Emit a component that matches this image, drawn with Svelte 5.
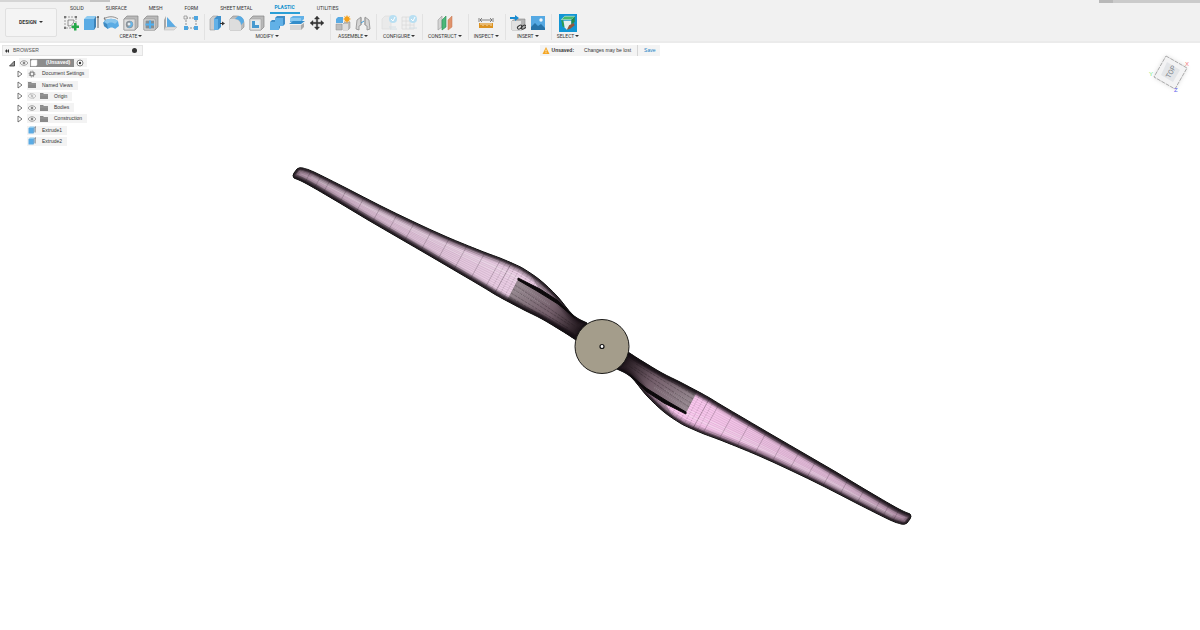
<script lang="ts">
  interface ToolGroup {
    name: string;
    icons: string[];
  }

  interface TreeItem {
    name: string;
    icon: string;
    eye?: 'on' | 'off';
    toggle?: boolean;
  }

  const tabs = ['SOLID', 'SURFACE', 'MESH', 'FORM', 'SHEET METAL', 'PLASTIC', 'UTILITIES'];
  let activeTab = $state('PLASTIC');

  const groups: ToolGroup[] = [
    { name: 'CREATE', icons: ['sketch', 'extrude', 'revolve', 'hole', 'web', 'draft', 'pattern'] },
    { name: 'MODIFY', icons: ['press', 'fillet', 'shell', 'combine', 'split', 'move'] },
    { name: 'ASSEMBLE', icons: ['component', 'joint'] },
    { name: 'CONFIGURE', icons: ['configure', 'table'] },
    { name: 'CONSTRUCT', icons: ['plane'] },
    { name: 'INSPECT', icons: ['measure'] },
    { name: 'INSERT', icons: ['derive', 'image'] },
    { name: 'SELECT', icons: ['select'] },
  ];

  const tree: TreeItem[] = [
    { name: 'Document Settings', icon: 'gear', toggle: true },
    { name: 'Named Views', icon: 'folder', toggle: true },
    { name: 'Origin', icon: 'folder', eye: 'off', toggle: true },
    { name: 'Bodies', icon: 'folder', eye: 'on', toggle: true },
    { name: 'Construction', icon: 'folder', eye: 'on', toggle: true },
    { name: 'Extrude1', icon: 'extrude' },
    { name: 'Extrude2', icon: 'extrude' },
  ];

  // Blade stations, tip to root: leading edge x, y and trailing edge x, y
  const stations = [
    [303, 168, 294, 178],
    [314, 172, 307, 184],
    [347, 188.5, 338, 202],
    [380, 205.5, 368, 220],
    [413, 221.5, 399, 238],
    [447, 237, 430, 256],
    [480, 250.5, 459, 273],
    [500, 258, 482, 286.5],
    [514, 264, 496, 295],
    [524, 269, 506, 300.5],
    [540, 280, 524, 310],
    [557, 296, 542, 319],
    [573, 315, 562, 331],
    [587, 323, 576, 340],
  ];

  const fix = (n: number) => n.toFixed(1);

  // smooth curve through the points
  const curve = (p: number[][]) =>
    p
      .slice(1)
      .map((to, i) => {
        const before = p[Math.max(i - 1, 0)];
        const from = p[i];
        const after = p[Math.min(i + 2, p.length - 1)];
        const c1 = [from[0] + (to[0] - before[0]) / 6, from[1] + (to[1] - before[1]) / 6];
        const c2 = [to[0] - (after[0] - from[0]) / 6, to[1] - (after[1] - from[1]) / 6];
        return `C${[...c1, ...c2, ...to].map(fix).join(' ')}`;
      })
      .join(' ');

  // line running along the blade, v = 0 on the leading edge and 1 on the trailing one
  const along = (v: number, from = 0, to = stations.length) => {
    const p = stations.slice(from, to).map((s) => [s[0] + (s[2] - s[0]) * v, s[1] + (s[3] - s[1]) * v]);
    return `M${p[0].map(fix).join(' ')} ${curve(p)}`;
  };

  const trailing = stations.map((s) => [s[2], s[3]]).reverse();
  const outline = `${along(0)} L${trailing[0].join(' ')} ${curve(trailing)} Q292 176 294 173 L297 169 Q299 167 303 168 Z`;

  // line running across the blade at a distance from the tip
  const across = (d: number) => {
    const x = 298 + d * 0.87;
    const y = 172 + d * 0.5;
    return `M${fix(x + 15)} ${fix(y - 27)} L${fix(x - 15)} ${fix(y + 27)}`;
  };

  const ribs = [11, 22, 32, 51, 70, 89, 107, 126, 145, 164, 183, 202, 219, 230];
  const fineRibs = Array.from({ length: 20 }, (_, i) => 225 + i * 5);
  const strands = Array.from({ length: 14 }, (_, i) => 0.08 + i * 0.065);
  const edges = [
    { width: 12, opacity: 0.12 },
    { width: 9, opacity: 0.2 },
    { width: 6, opacity: 0.35 },
    { width: 4, opacity: 0.6 },
  ];
</script>

{#snippet icon(name: string)}
  <svg class="icon" class:large={name === 'select'} viewBox="0 0 16 16" aria-hidden="true">
    {#if name === 'sketch'}
      <path d="M2 2h11v11H2z" fill="none" stroke="#777" stroke-width=".7" stroke-dasharray="2 1" />
      <path d="M5 11V5h6c0 3-2 6-6 6z" fill="none" stroke="#666" stroke-width=".7" />
      <path d="M1 1h2v2H1zM12 1h2v2h-2zM1 12h2v2H1z" fill="#777" />
      <path d="M11 8h2.500v2.500H16V13h-2.500v2.500H11V13H8.500v-2.500H11z" fill="#23a847" />
    {:else if name === 'extrude'}
      <path d="M1 4l3-3h9l-2 3z" fill="#8fcbf0" />
      <path d="M1 4h10v11H1z" fill="#5aabe4" />
      <path d="M11 4l2-3v11l-2 3z" fill="#3c82b7" />
      <path d="M15 2v11M14 3l1-2 1 2" stroke="#444" stroke-width=".8" fill="none" />
    {:else if name === 'revolve'}
      <path d="M1 6c4-3 10-3 14 0l1 5-4 3c-2-2-5-2-7 0l-4-3z" fill="#5aabe4" />
      <path d="M1 6c4-3 10-3 14 0l-3 3c-2-2-6-2-8 0z" fill="#8bc6ec" />
      <path d="M0 7l4 2 1 5-4-3z" fill="#3f89bf" />
      <path d="M1 4c4-3 10-3 14 0M2 2L1 4l2 1" fill="none" stroke="#666" stroke-width=".7" />
    {:else if name === 'hole'}
      <path d="M1 4l3-3h11v11l-3 3H1z" fill="#b9b9b9" stroke="#858585" stroke-width=".7" />
      <path d="M1 4h11v11H1z" fill="#dedede" stroke="#929292" stroke-width=".6" />
      <circle cx="6.500" cy="9.500" r="3.700" fill="#8a9299" />
      <path d="M7 6a4 4 0 0 1 3 3 4 4 0 0 1-6 3c3 0 4-2 3-6z" fill="#68b5e7" />
      <circle cx="6" cy="9" r="1.500" fill="#e3edf2" />
    {:else if name === 'web'}
      <path d="M1 4l3-3h11v11l-3 3H1z" fill="#b9b9b9" stroke="#858585" stroke-width=".7" />
      <path d="M1 4h11v11H1z" fill="#dedede" stroke="#929292" stroke-width=".6" />
      <path d="M2.500 5.500h8.500v8H2.500z" fill="#858e94" />
      <path d="M6 5.500h2v3h3v2H8v3H6v-3H2.500v-2H6z" fill="#51b0f0" />
    {:else if name === 'draft'}
      <path d="M3 1v11l-2 3V5z" fill="#a8a8a8" />
      <path d="M4 2l9 10H4z" fill="#5aabe4" />
      <path d="M3 12h11l-3 3H1z" fill="#dedede" stroke="#aaa" stroke-width=".4" />
    {:else if name === 'pattern'}
      <path d="M3 3h10v10H3z" fill="none" stroke="#666" stroke-width=".7" stroke-dasharray="2 1" />
      <path d="M11 1h4v4h-4zM1 11h4v4H1zM11 11h4v4h-4z" fill="#4da5df" />
      <path d="M1 1h3v3H1z" fill="#eee" stroke="#777" stroke-width=".6" />
    {:else if name === 'press'}
      <path d="M1 4l3-3h5v11l-3 3H1z" fill="#ccc" stroke="#999" stroke-width=".6" />
      <path d="M5 4l3-3h4v11l-3 3H5z" fill="#3f91cd" />
      <path d="M5 4h4v11H5z" fill="#62b1e7" />
      <path d="M11 8h2V6.500l3 2-3 2V9h-2z" fill="#333" />
    {:else if name === 'fillet'}
      <path d="M1 4l3-3h4c4 0 7 3 7 8v3l-3 3H1z" fill="#bcbcbc" stroke="#888" stroke-width=".6" />
      <path d="M1 4h4c4 0 7 3 7 7v4H1z" fill="#ddd" />
      <path d="M6 4l3-3c4 0 6 3 6 6l-3 3c0-3-2-6-6-6z" fill="#58abe4" />
    {:else if name === 'shell'}
      <path d="M1 4l3-3h11v11l-3 3H1z" fill="#b9b9b9" stroke="#858585" stroke-width=".7" />
      <path d="M1 4h11v11H1z" fill="#e4e4e4" stroke="#999" stroke-width=".5" />
      <path d="M3 6h7v7H3z" fill="#4799d0" />
      <path d="M6 6h4v4H6z" fill="#e2edf4" />
    {:else if name === 'combine'}
      <path d="M1 7l2-2h3V3l2-2h8v8l-2 2h-3v2l-2 2H1z" fill="#3f8dc6" />
      <path d="M1 7h5V3h8v8h-4v4H1z" fill="#62b1e7" />
    {:else if name === 'split'}
      <path d="M1 3l3-2h11v3l-3 3H1z" fill="#62b1e7" />
      <path d="M1 3h11v3H1z" fill="#89c9f0" />
      <path d="M0 9l4-3h12l-4 3z" fill="#338dca" />
      <path d="M1 10h11l3-2v4l-3 3H1z" fill="#aaa" />
      <path d="M1 10h11v5H1z" fill="#d7d7d7" />
    {:else if name === 'move'}
      <path
        d="M8 1l2.500 3H8.700v3.300H12V5.500L15 8l-3 2.500V8.700H8.700V12h1.800L8 15l-2.500-3h1.800V8.700H4v1.800L1 8l3-2.500v1.800h3.300V4H5.500z"
        fill="#333"
        stroke="#333"
        stroke-width=".4"
      />
    {:else if name === 'component'}
      <path d="M1 4l2-2h5v6H1z" fill="#5aabe4" />
      <path d="M1 9h6v6H1zM8 9l2-2h5v6l-2 2H8z" fill="#bcbcbc" stroke="#8d8d8d" stroke-width=".5" />
      <path d="M8 9h5v6H8z" fill="#dedede" />
      <path d="M12 0l1 2 2-1-1 2 2 1-2 1 1 2-2-1-1 2-1-2-2 1 1-2-2-1 2-1-1-2 2 1z" fill="#f5a11a" />
    {:else if name === 'joint'}
      <path d="M2 5l4-3v8l-2 1v4l-3-1zM14 5l-4-3v8l2 1v4l3-1z" fill="#d5d5d5" stroke="#8e8e8e" stroke-width=".8" />
      <path d="M6 3v7M10 3v7" stroke="#a5a5a5" stroke-width="1.200" />
      <path d="M6 8l3-2" stroke="#409bd6" />
    {:else if name === 'configure'}
      <path d="M1 4l3-3h6v13H1z" fill="#eaeaea" stroke="#ddd" stroke-width=".7" />
      <circle cx="12" cy="4" r="4" fill="#b9dff2" />
      <path d="M10 4l2 2 2-4" fill="none" stroke="#fff" />
      <path d="M8 12h7M9 14h7" stroke="#d4e0e6" />
    {:else if name === 'table'}
      <path d="M1 2h12v12H1zM1 6h12M1 10h12M5 2v12M9 2v12" fill="#f0f0f0" stroke="#dadada" stroke-width=".8" />
      <circle cx="12" cy="4" r="4" fill="#b9dff2" />
      <path d="M10 4l2 2 2-4" fill="none" stroke="#fff" />
      <path d="M8 13h8" stroke="#d4e0e6" />
    {:else if name === 'plane'}
      <path d="M1 5l4-4v11l-4 3z" fill="#d5d5d5" stroke="#999" stroke-width=".6" />
      <path d="M5 5l4-4v11l-4 3z" fill="#4cb779" stroke="#268d51" stroke-width=".6" />
      <path d="M11 5l4-4v11l-4 3z" fill="#df936c" stroke="#c6774f" stroke-width=".5" />
    {:else if name === 'measure'}
      <path d="M1 3v4M15 3v4M2 5h12M4 3L2 5l2 2M12 3l2 2-2 2" fill="none" stroke="#555" stroke-width=".7" />
      <path d="M1 8h14v5H1z" fill="#dc9321" />
      <path d="M3 8v2M5 8v3M7 8v2M9 8v3M11 8v2M13 8v3" stroke="#fff" stroke-width=".7" />
    {:else if name === 'derive'}
      <path d="M2 6l3-2h10v8l-3 3H2z" fill="#b4b4b4" stroke="#888" stroke-width=".6" />
      <path d="M2 6h9v9H2z" fill="#e1e1e1" />
      <path d="M0 2h5V0l4 3-4 3V4H0z" fill="#198bd0" />
      <rect x="7" y="11" width="5" height="3" rx="1.500" fill="none" stroke="#333" transform="rotate(-35 9 12)" />
      <rect x="11" y="11" width="5" height="3" rx="1.500" fill="none" stroke="#333" transform="rotate(-35 13 12)" />
    {:else if name === 'image'}
      <path d="M1 1h14v14H1z" fill="#55a9e3" />
      <path d="M1 12l4-4 3 3 3-2 4 4v2H1z" fill="#2874a9" />
      <circle cx="11" cy="5" r="1.700" fill="#eef7fc" />
    {:else if name === 'select'}
      <path d="M0 0h16v16H0z" fill="#1296d4" />
      <path d="M2 5l3-3h9l-3 3z" fill="#48ba6c" stroke="#dff0e5" stroke-width=".5" />
      <path d="M2 5l2 1 1 6-2-1z" fill="#2c9b50" />
      <path d="M4 6h7v4l-4 4-2-2z" fill="#e6eeee" />
      <path d="M11 5l3-3v5l-3 2z" fill="#248b48" />
      <path d="M7 14l2-4 4-2 1 2-4 3z" fill="#92573b" />
    {/if}
  </svg>
{/snippet}

{#snippet treeIcon(name: string)}
  {#if name === 'extrude'}
    {@render icon('extrude')}
  {:else}
    <svg class="icon" viewBox="0 0 8 8" aria-hidden="true">
      {#if name === 'gear'}
        <circle cx="4" cy="4" r="2" fill="none" stroke="#777" stroke-width="1.200" />
        <circle cx="4" cy="4" r="3" fill="none" stroke="#777" stroke-width=".8" stroke-dasharray="1.200 1.160" />
      {:else if name === 'folder'}
        <path d="M0 1h3l1 1h4v5H0z" fill="#8a8a8a" />
        <path d="M0 3h8" stroke="#aaa" stroke-width=".5" />
      {:else if name === 'eye' || name === 'hidden'}
        <path
          d="M0 4c2-3 6-3 8 0-2 3-6 3-8 0z"
          fill="none"
          stroke={name === 'eye' ? '#888' : '#b5b5b5'}
          stroke-width=".8"
        />
        <circle cx="4" cy="4" r="1.300" fill={name === 'eye' ? '#888' : '#c5c5c5'} />
        {#if name === 'hidden'}<path d="M2 1l4 6" stroke="#b5b5b5" stroke-width=".6" />{/if}
      {:else if name === 'document'}
        <path d="M1 2l1-1h5v5L6 7H1z" fill="#fff" stroke="#ddd" stroke-width=".5" />
      {:else if name === 'closed'}
        <path d="M2 1l4 3-4 3z" fill="#fff" stroke="#555" stroke-width=".8" />
      {:else if name === 'open'}
        <path d="M6.500 2v5h-5z" fill="#999" stroke="#333" stroke-width=".8" />
      {:else if name === 'active'}
        <circle cx="4" cy="4" r="3" fill="#fff" stroke="#555" stroke-width=".7" />
        <circle cx="4" cy="4" r="1.200" fill="#333" />
      {/if}
    </svg>
  {/if}
{/snippet}

{#snippet blade(skin: string)}
  <g clip-path="url(#bladeClip)">
    <path d={outline} fill="url(#{skin})" />
    <path d={along(0.3, 1, 10)} fill="none" stroke="#fff" stroke-width="3" opacity=".2" />
    <path d={along(0.42, 1, 10)} fill="none" stroke="#fff" stroke-width="1" opacity=".3" />
    {#each strands as v}
      <path d={along(v)} fill="none" stroke="#3c2b38" stroke-width=".3" opacity=".35" />
    {/each}
    {#each ribs as d}
      <path d={across(d)} stroke="#4b3b47" stroke-width=".5" opacity=".55" />
    {/each}
    {#each fineRibs as d}
      <path d={across(d)} stroke="#4b3b47" stroke-width=".5" stroke-dasharray="2 1" opacity=".4" />
    {/each}
    <path d="M526 266L541 277 558 292 590 320 575 342 550 310z" fill="url(#rootShade)" opacity=".5" />
    <path d="M518 279L540 289 560 303 590 323 577 342 540 320 506 302z" fill="url(#rootShade)" />
    <path
      d="M515 285L575 326M513 289L570 325M511 293L568 328M510 297L566 330"
      stroke="#191116"
      stroke-width=".8"
      stroke-dasharray="3 1"
      opacity=".35"
    />
    <path
      d="M519 284L550 305M517 288L540 303M515 291L530 300"
      stroke="#b5aeb2"
      stroke-width="2"
      stroke-dasharray="1 1"
      opacity=".3"
    />
    {#each edges as edge}
      <path d={outline} fill="none" stroke="#120c10" stroke-width={edge.width} opacity={edge.opacity} />
    {/each}
    <path d={along(1)} fill="none" stroke="#120c10" stroke-width="8" opacity=".35" />
    <path d="M518 278L540 289 557 300 575 318 558 304 537 291 518 280z" fill="#0c090b" stroke="#0c090b" />
  </g>
  <path d={outline} fill="none" stroke="#111" stroke-width="1" stroke-linejoin="round" />
{/snippet}

<main>
  <header>
    <div class="titleStrip">
      <span class="fileTabs"></span>
      <span class="windowTabs"></span>
    </div>
    <div class="toolbar">
      <button class="workspace">DESIGN <span class="caret"></span></button>
      <div class="ribbon">
        <nav class="tabs">
          {#each tabs as tab}
            <button class="tab {tab === activeTab ? 'active' : ''}" onclick={() => (activeTab = tab)}>
              {tab}
            </button>
          {/each}
        </nav>
        <div class="groups">
          {#each groups as group}
            <section class="group">
              <div class="tools">
                {#each group.icons as name}
                  <button class="tool" aria-label={name}>{@render icon(name)}</button>
                {/each}
              </div>
              <button class="groupName">{group.name}<span class="caret"></span></button>
            </section>
          {/each}
        </div>
      </div>
    </div>
  </header>

  <div class="viewport">
    <svg class="model" viewBox="0 43 1200 587" aria-label="Propeller">
      <defs>
        <clipPath id="bladeClip"><path d={outline} /></clipPath>
        <linearGradient id="mauve" gradientUnits="userSpaceOnUse" x1="298" y1="172" x2="510" y2="290">
          <stop offset="0" stop-color="#bda1b4" />
          <stop offset=".3" stop-color="#d9bcd2" />
          <stop offset="1" stop-color="#ebcee5" />
        </linearGradient>
        <linearGradient id="pink" gradientUnits="userSpaceOnUse" x1="298" y1="172" x2="510" y2="290">
          <stop offset="0" stop-color="#bf9db5" />
          <stop offset=".3" stop-color="#dfbad6" />
          <stop offset="1" stop-color="#fac7ee" />
        </linearGradient>
        <linearGradient id="rootShade" gradientUnits="userSpaceOnUse" x1="512" y1="290" x2="576" y2="328">
          <stop offset="0" stop-color="#95878f" />
          <stop offset=".6" stop-color="#745f6b" />
          <stop offset="1" stop-color="#2b2026" />
        </linearGradient>
      </defs>
      {@render blade('mauve')}
      <g transform="rotate(180 602 346)">{@render blade('pink')}</g>
      <circle cx="602" cy="346.500" r="27" fill="#a49d8b" stroke="#1b1a18" />
      <circle cx="602" cy="346.500" r="2" fill="#fff" stroke="#111" stroke-width="1.200" />
    </svg>

    <aside class="browser">
      <div class="browserHead">
        <span class="collapse"></span>
        <span>BROWSER</span>
        <button class="dot" aria-label="Panel options"></button>
      </div>
      <ul class="tree">
        <li class="root">
          <button class="mark" aria-label="Collapse">{@render treeIcon('open')}</button>
          <div class="item">
            <button class="mark" aria-label="Visibility">{@render treeIcon('eye')}</button>
            <span class="document">
              <span class="mark">{@render treeIcon('document')}</span>
              <b>(Unsaved)</b>
            </span>
            <span class="mark">{@render treeIcon('active')}</span>
          </div>
        </li>
        {#each tree as item}
          <li>
            {#if item.toggle}
              <button class="mark" aria-label="Expand {item.name}">{@render treeIcon('closed')}</button>
            {:else}
              <span class="mark"></span>
            {/if}
            <div class="item">
              {#if item.eye}
                <button class="mark" aria-label="Visibility of {item.name}">
                  {@render treeIcon(item.eye === 'on' ? 'eye' : 'hidden')}
                </button>
              {/if}
              <span class="mark">{@render treeIcon(item.icon)}</span>
              <span class="itemName">{item.name}</span>
            </div>
          </li>
        {/each}
      </ul>
    </aside>

    <div class="notice">
      <svg class="warning" viewBox="0 0 8 8" aria-hidden="true">
        <path d="M4 0l4 8H0z" fill="#f5a623" />
        <path d="M4 3v2M4 6v1" stroke="#fff" />
      </svg>
      <b>Unsaved:</b>
      <span class="message">Changes may be lost</span>
      <button class="save">Save</button>
    </div>

    <svg class="cube" viewBox="0 0 46 46" aria-label="View cube">
      <path class="face" d="M20 6L41 18 29 39 8 27z" />
      <path d="M21 12L34 20 27 32 15 25z" fill="#e3e5e8" />
      <text class="faceName" transform="translate(27 23) rotate(-60)" text-anchor="middle">TOP</text>
      <text class="axis" x="39" y="16" fill="#f27777">X</text>
      <text class="axis" x="3" y="26" fill="#7be87b">Y</text>
      <text class="axis" x="28" y="42" fill="#6464ee">Z</text>
    </svg>
  </div>
</main>

<style>
  :global(body) {
    margin: 0;
    background: #fff;
  }

  main {
    font-family: Roboto, 'Liberation Sans', sans-serif;
    font-size: 5px;
    line-height: 7px;
    color: #333;
  }

  button {
    margin: 0;
    padding: 0;
    border: none;
    background: none;
    color: inherit;
    font: inherit;
    cursor: pointer;
  }

  .icon {
    display: block;
    width: 100%;
    height: 100%;
  }

  header {
    background: #f1f1f1;
    border-bottom: 2px solid #ebebeb;
  }

  .titleStrip {
    display: flex;
    justify-content: space-between;
    height: 3px;

    & .fileTabs {
      width: 90px;
      height: 2px;
      background: #d5d5d5;
      border-right: 20px solid #c4c4c4;
    }

    & .windowTabs {
      width: 87px;
      background: #cbcbcb;
      border-left: 14px solid #b9b9b9;
    }
  }

  .toolbar {
    display: flex;
    gap: 2px;
    padding-left: 5px;
  }

  .workspace {
    width: 52px;
    height: 29px;
    margin-top: 5px;
    border: 1px solid #e0e0e0;
    border-radius: 2px;
    background: #f4f4f4;
    font-weight: bold;
  }

  .caret {
    display: inline-block;
    margin-left: 1px;
    border: 2px solid transparent;
    border-top-color: #333;
    border-bottom: none;
    vertical-align: 1px;
  }

  .tabs {
    display: flex;
    gap: 12px;
    padding-left: 6px;

    & .tab {
      height: 11px;
      padding: 0 5px;
      border-bottom: 1px solid transparent;

      &.active {
        border-bottom: 2px solid #2b9fd6;
        color: #0d8fce;
        font-weight: bold;
      }
    }
  }

  .groups {
    display: flex;
    padding-bottom: 1px;
  }

  .group {
    display: flex;
    flex-direction: column;
    align-items: center;
    gap: 2px;
    padding: 1px 5px 0 4px;
    border-right: 1px solid #e2e2e2;

    &:last-child {
      border: none;
    }

    & .tools {
      display: flex;
      align-items: center;
      gap: 4px;
      height: 16px;
    }

    & .tool {
      width: 16px;
      height: 16px;
    }

    & .tool:has(.large) {
      width: 18px;
      height: 18px;
    }

    & .groupName {
      padding: 0 1px;
      white-space: nowrap;
    }
  }

  .viewport {
    display: grid;
    grid-template-columns: 1fr auto 1fr;
    align-items: start;
    font-family: 'Liberation Sans', Arial, sans-serif;
  }

  .model {
    grid-area: 1 / 1 / 2 / 4;
    display: block;
    width: 100%;
  }

  .browser {
    grid-area: 1 / 1;
    width: 141px;
    margin: 2px 0 0 2px;
  }

  .browserHead {
    display: flex;
    align-items: center;
    gap: 4px;
    height: 9px;
    padding: 0 5px 0 2px;
    border: 1px solid #e4e4e4;
    background: #f4f4f4;
    color: #555;

    & .collapse {
      display: flex;

      &::before,
      &::after {
        content: '';
        border: 2px solid transparent;
        border-right-color: #333;
        border-left: none;
      }
    }

    & .dot {
      width: 5px;
      height: 5px;
      margin-left: auto;
      border-radius: 50%;
      background: #333;
    }
  }

  .tree {
    display: grid;
    align-content: space-between;
    height: 88px;
    margin: 2px 0 0;
    padding: 0 0 0 14px;
    list-style: none;

    & li {
      display: flex;
      align-items: center;
      gap: 3px;

      &.root {
        margin-left: -8px;
      }
    }

    & .mark {
      flex: none;
      width: 8px;
      height: 8px;
    }

    & .item {
      display: flex;
      align-items: center;
      gap: 4px;
      height: 9px;
      padding: 0 5px 0 1px;
      background: #f3f3f3;
    }

    & .itemName {
      margin-left: 2px;
    }

    & .document {
      display: flex;
      align-items: center;
      gap: 8px;
      height: 8px;
      padding-right: 4px;
      background: #8c8c8c;
      color: #fff;
    }

    & .root .item {
      gap: 2px;
      padding-right: 3px;
    }
  }

  .notice {
    grid-area: 1 / 2;
    display: flex;
    align-items: center;
    height: 11px;
    margin-top: 2px;
    padding-left: 2px;
    background: #f4f4f4;

    & .warning {
      width: 8px;
      height: 7px;
      margin-right: 2px;
    }

    & .message {
      padding: 0 6px 0 10px;
    }

    & .save {
      height: 11px;
      padding: 0 5px 0 6px;
      border-left: 1px solid #d5d5d5;
      color: #1681c4;
    }
  }

  .cube {
    grid-area: 1 / 3;
    justify-self: end;
    width: 46px;
    height: 46px;
    margin: 7px 8px 0 0;

    & .face {
      fill: #f3f3f4;
      stroke: #aaa;
      stroke-width: 1px;
      stroke-dasharray: 4 1;
      filter: drop-shadow(0 0 2px #ddd);
    }

    & .faceName {
      font: 7px Roboto, sans-serif;
      fill: #777d85;
    }

    & .axis {
      font-size: 6px;
    }
  }
</style>
